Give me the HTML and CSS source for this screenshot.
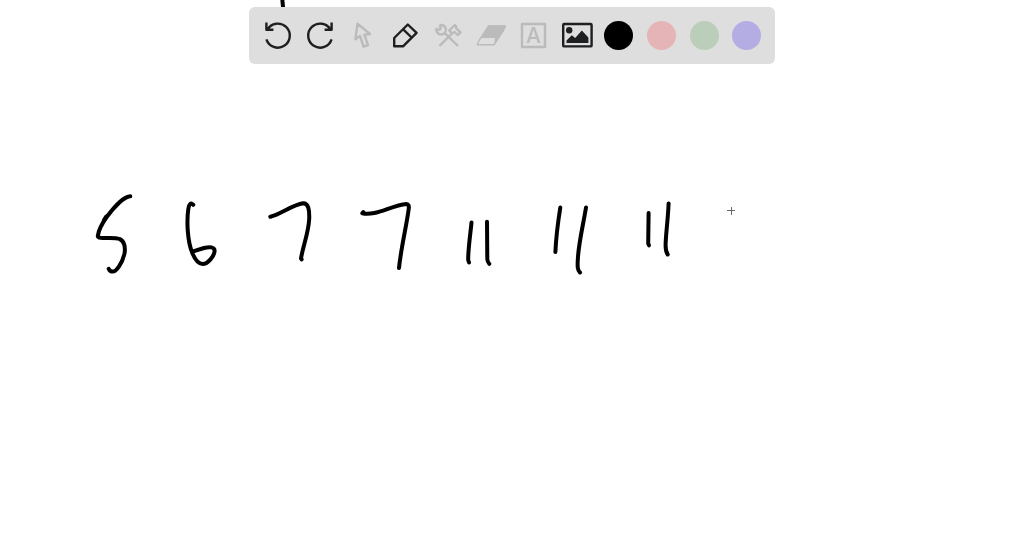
FILE: index.html
```html
<!DOCTYPE html>
<html lang="en">
<head>
<meta charset="UTF-8" />
<meta name="viewport" content="width=device-width, initial-scale=1" />
<title>Whiteboard</title>
<link rel="stylesheet" href="styles.css">
</head>
<body>
<div class="toolbar" role="toolbar" aria-label="Drawing tools">
  <button class="tool" aria-label="Undo">
    <svg class="icon" viewBox="0 0 33 33"><path d="M5.4 20.4A12 12 0 1 0 6.4 10.6M5.4 3.6V10.8H12.4" /></svg>
  </button>
  <button class="tool" aria-label="Redo">
    <svg class="icon" viewBox="0 0 33 33"><path d="M27.6 20.4A12 12 0 1 1 26.6 10.6M27.6 3.6V10.8H20.6" /></svg>
  </button>
  <button class="tool muted" aria-label="Select">
    <svg class="icon" viewBox="0 0 33 33"><path d="M11.5 4.8L9.4 20.4L14 17L17.6 27.6L22 26L18.4 15.8L24 15Z" /></svg>
  </button>
  <button class="tool" aria-label="Pen">
    <svg class="icon" viewBox="0 0 33 33"><path d="M18.8 5.5L27.6 13.8L14 27.3H5.2V19ZM14.2 10.3L22.6 18.5" /></svg>
  </button>
  <button class="tool muted" aria-label="Tools">
    <svg class="icon" viewBox="0 0 33 33">
      <path d="M7.6 6.2A4.8 4.8 0 1 1 4.4 10L7.6 10.8L8.8 9.4L7.6 6.2M12.2 13.6L26 27M19.4 15.2L7.4 27" />
      <path d="M17.2 11.4L22.8 6L24.2 7.6L24 9.2L28.6 13.4L25.6 16L22.6 13L20 14.4Z" />
    </svg>
  </button>
  <button class="tool muted" aria-label="Eraser">
    <svg class="icon" viewBox="0 0 33 33">
      <path class="thin" d="M14.6 7H31.4L29.4 11.6L20 25.8H3.2L5.4 21Z" />
      <path class="solid" d="M14.6 6.4H32L29.6 11.6L20.4 25.8L20.8 19H7Z" />
    </svg>
  </button>
  <button class="tool muted" aria-label="Text">
    <svg class="icon" viewBox="0 0 33 33">
      <rect x="5" y="5" width="23" height="23" />
      <text x="16.5" y="24" text-anchor="middle">A</text>
    </svg>
  </button>
  <button class="tool" aria-label="Image">
    <svg class="icon" viewBox="0 0 33 33">
      <rect x="3.2" y="5" width="28.4" height="22.4" rx="1" />
      <circle class="solid" cx="9.2" cy="11.2" r="3.2" />
      <path class="solid" d="M6.5 24V21.4L11.8 16.2L15.2 19L21.8 11.4L28.4 18.4V24Z" />
    </svg>
  </button>
  <button class="tool" aria-label="Black"><span class="swatch black"></span></button>
  <button class="tool" aria-label="Red"><span class="swatch red"></span></button>
  <button class="tool" aria-label="Green"><span class="swatch green"></span></button>
  <button class="tool" aria-label="Purple"><span class="swatch purple"></span></button>
</div>

<svg class="board" role="img" aria-label="5 6 7 7 11 11 11">
  <path d="M282 -4L283 7" />
  <!-- 5 -->
  <path d="M130.3 196.2C124 196.5 114 207 106.5 217.3C101 225 98.5 231 97.8 236C97.8 240 113 236.5 119.5 239C124 240.5 125.8 247 124.4 254C122 264 116 271.6 112.7 271.6C110.5 271.6 109.5 270.5 108.7 268.8M104 220L106 216.8" />
  <!-- 6 -->
  <path d="M193.3 204.8C191 202 189 204 188.3 209C186.6 221 187.3 241 192.3 253C195 259.5 199 264 202.7 264C208 264 214.8 255.5 214.6 250.5C214.3 247 210 246.5 204 248L192.3 251.7" />
  <!-- 7 7 -->
  <path d="M270.3 216.8C281 214 293 204.5 303 203.2C308.5 203 309.5 210 309.2 219C308.5 233 303 246 301 258.5L301.6 259.3" />
  <path d="M363.3 212L362.3 213.2C375 216.5 391 205.5 406.5 204C408.5 204 409.2 206 408.7 209C406.5 226 401 248 399 268" />
  <!-- 11 11 11 -->
  <path d="M471.5 222.5C470.3 235 468 250 468.2 260L469 262.5" />
  <path d="M487 221.8L487.3 259C487.4 261.5 488 262.5 489.3 263.8" />
  <path d="M560.3 207.5C558 222 556 238 555.4 252" />
  <path d="M586 207.5C583 226 579 241 577.9 258C577.3 267 577.5 270 580 272.5" />
  <path d="M648.6 213L648.2 243.5L649 245.3" />
  <path d="M668.6 203.5C668 220 665.5 236 665.6 246C665.7 250 666.3 252.5 667.7 254.5" />
  <path class="crosshair" d="M727 210.5H735M731.5 207V215" />
</svg>
</body>
</html>
```
FILE: styles.css
```css
body {
  margin: 0;
  background: #fff;
  font-family: Inter, "Liberation Sans", sans-serif;
}
/* Toolbar floats over the board */
.toolbar {
  position: absolute;
  top: 7px;
  left: 0;
  right: 0;
  box-sizing: border-box;
  max-width: 526px;
  margin: 0 auto;
  padding: 12px 7px;
  display: flex;
  background: #dedede;
  border-radius: 6px;
}
.tool {
  flex: 1;
  min-width: 0;
  height: 33px;
  padding: 0;
  border: none;
  background: none;
  color: #1e1f21;
  display: flex;
  align-items: center;
  justify-content: center;
  cursor: pointer;
}
.muted {
  color: #bbb;
}
.icon {
  flex: none;
  width: 33px;
  height: 33px;
  fill: none;
  stroke: currentColor;
  stroke-width: 2.4;
  stroke-linejoin: round;
}
.icon .thin {
  stroke-width: 1.4;
}
.icon .solid {
  fill: currentColor;
  stroke: none;
}
.icon text {
  fill: currentColor;
  stroke: none;
  font-family: Inter, "Liberation Sans", sans-serif;
  font-size: 21px;
  font-weight: 500;
}
.swatch {
  flex: none;
  width: 29px;
  height: 29px;
  border-radius: 50%;
}
.black { background: #000; }
.red { background: #e5b4b7; }
.green { background: #bbceba; }
.purple { background: #b3ade3; }
/* Handwriting */
.board {
  display: block;
  width: 100%;
  height: 100vh;
  fill: none;
  stroke: #000;
  stroke-width: 4;
  stroke-linecap: round;
  stroke-linejoin: round;
}
.crosshair {
  stroke: #666;
  stroke-width: 1;
  stroke-linecap: butt;
}
```
